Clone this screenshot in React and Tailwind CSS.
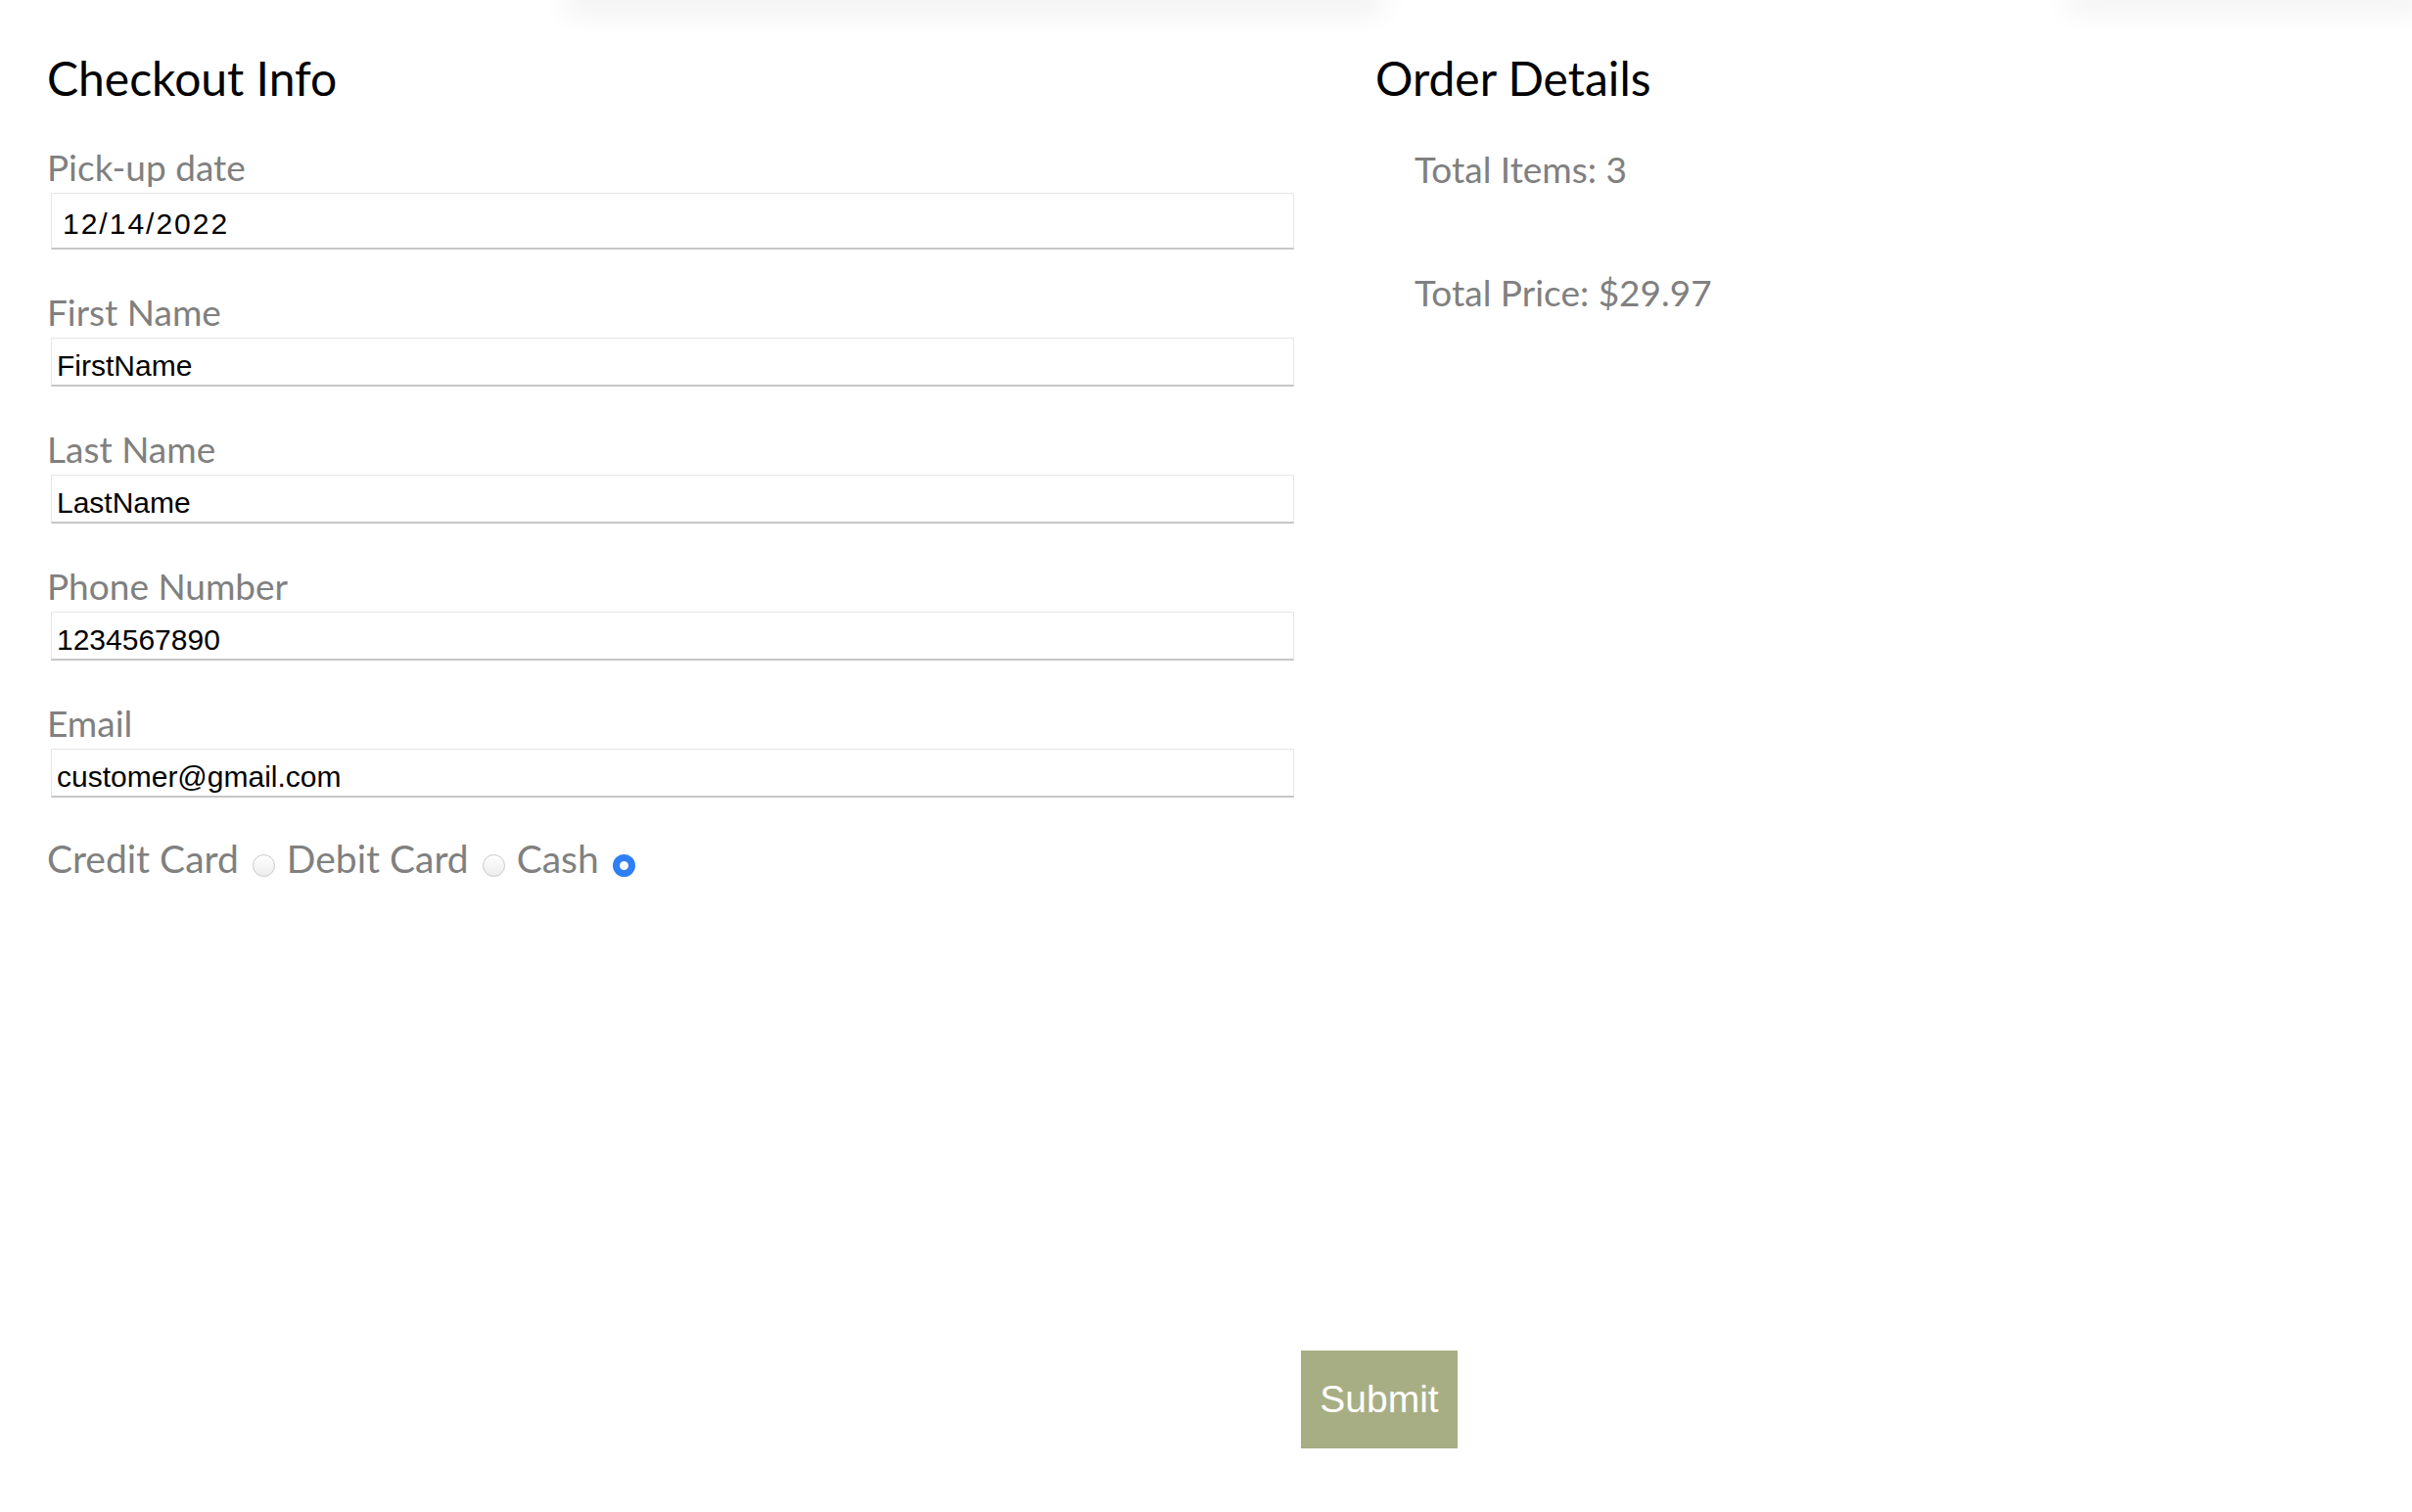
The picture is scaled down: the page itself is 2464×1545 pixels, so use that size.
import React from "react";

function Field({ label, value, date }) {
  return (
    <div className="mb-[45px]">
      <div className="text-[37px] leading-none text-[#808080] mb-[8px]">{label}</div>
      <input
        type="text"
        readOnly
        defaultValue={value}
        className={
          date
            ? "ml-[4px] block w-[1270px] h-[58px] pt-[6px] pb-0 pl-[11px] bg-white border border-[#e6e6e6] border-b-2 border-b-[#c6c6c6] text-[30px] tracking-[2px] text-black font-['Liberation_Sans',Arial,sans-serif] outline-none"
            : "ml-[4px] block w-[1270px] h-[50px] pt-[9px] pb-0 pl-[5px] bg-white border border-[#e6e6e6] border-b-2 border-b-[#c6c6c6] text-[30px] text-black font-['Liberation_Sans',Arial,sans-serif] outline-none"
        }
      />
    </div>
  );
}

function Radio({ checked }) {
  if (checked) {
    return (
      <span className="inline-block w-[23px] h-[23px] rounded-full border-[7px] border-[#2f7ff6] bg-white align-[-4px] ml-[14px] mr-[12px]" />
    );
  }
  return (
    <span className="inline-block w-[23px] h-[23px] rounded-full border border-[#c9c9c9] bg-gradient-to-b from-white to-[#ececec] align-[-4px] ml-[14px] mr-[12px]" />
  );
}

export default function App() {
  return (
    <div className="min-h-screen bg-white overflow-hidden font-['Lato','Open_Sans',sans-serif]">
      <div className="flex h-0">
        <div className="ml-[591px] w-[953px] h-0 shadow-[0_0_28px_14px_rgba(0,0,0,0.06)]" />
        <div className="ml-[725px] w-[400px] h-0 shadow-[0_0_28px_14px_rgba(0,0,0,0.05)]" />
      </div>
      <div className="flex pl-[48px] pt-[56px]">
        <div className="w-[1278px]">
          <h1 className="text-[48px] leading-none text-black mb-[48px]">Checkout Info</h1>
          <Field label="Pick-up date" value="12/14/2022" date />
          <Field label="First Name" value="FirstName" />
          <Field label="Last Name" value="LastName" />
          <Field label="Phone Number" value="1234567890" />
          <Field label="Email" value="customer@gmail.com" />
          <div className="-mt-[2px] text-[39px] leading-none text-[#808080] whitespace-nowrap">
            Credit Card<Radio />Debit Card<Radio />Cash<Radio checked />
          </div>
        </div>
        <div className="ml-[79px]">
          <h1 className="text-[48px] leading-none text-black mb-[50px]">Order Details</h1>
          <div className="ml-[40px] text-[37px] leading-none text-[#808080]">
            <p className="mb-[89px]">Total Items: 3</p>
            <p>Total Price: $29.97</p>
          </div>
        </div>
      </div>
      <div className="flex pl-[1329px] mt-[483px]">
        <button className="w-[160px] h-[100px] bg-[#a8ae83] text-white text-[39px] font-['Liberation_Sans',Arial,sans-serif] flex items-center justify-center">
          Submit
        </button>
      </div>
    </div>
  );
}
